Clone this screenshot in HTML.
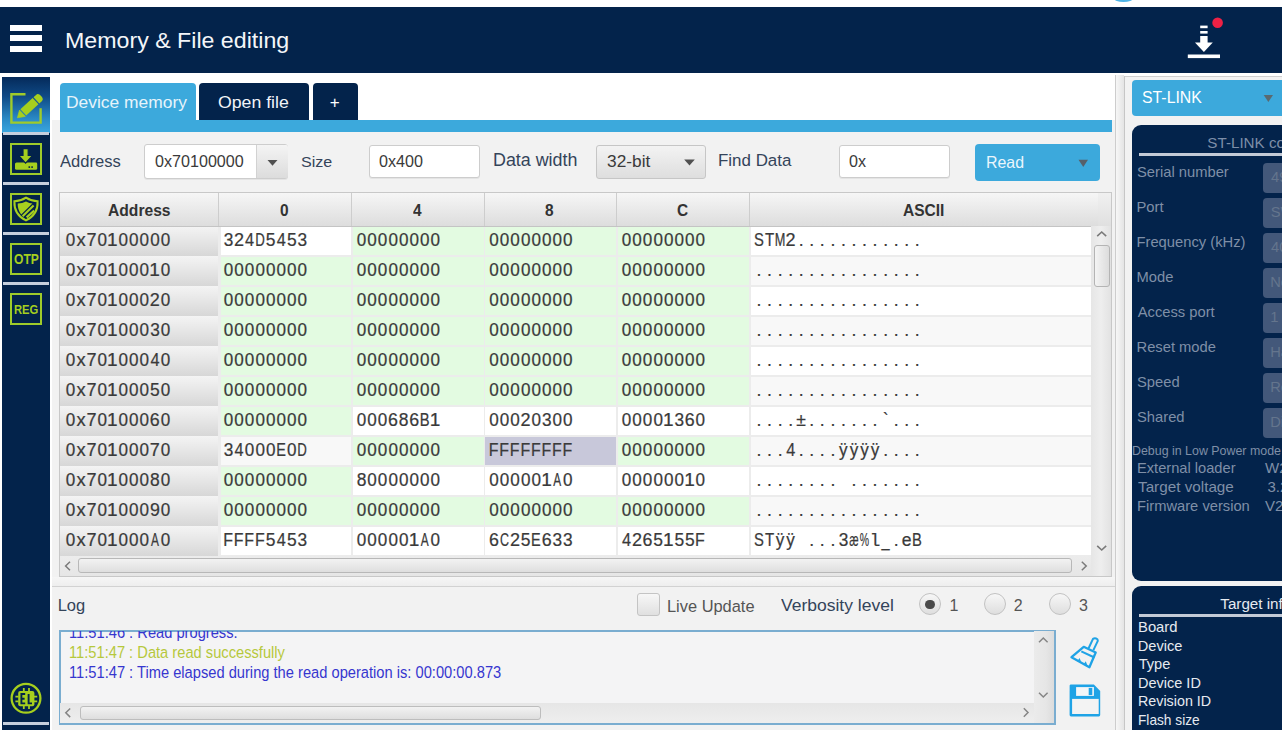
<!DOCTYPE html>
<html><head><meta charset="utf-8"><title>Memory &amp; File editing</title>
<style>
*{margin:0;padding:0;box-sizing:border-box}
html,body{width:1282px;height:730px;overflow:hidden;background:#fff;position:relative}
.a{position:absolute}
svg.a{overflow:visible}
.tS,.tM{position:absolute;white-space:pre;line-height:1;font-family:"Liberation Sans", sans-serif}
.tM{font-family:"Liberation Mono", monospace}
</style></head>
<body>
<div class="a" style="left:0px;top:0px;width:1282px;height:77px;background:#fff"></div><div class="a" style="left:1114px;top:-5px;width:19px;height:7px;border-radius:50%;background:#4db3e6"></div><div class="a" style="left:0px;top:7px;width:1282px;height:65.5px;background:#03234b"></div><div class="a" style="left:10px;top:25px;width:32px;height:6px;background:#fff"></div><div class="a" style="left:10px;top:35px;width:32px;height:6px;background:#fff"></div><div class="a" style="left:10px;top:45.6px;width:32px;height:6px;background:#fff"></div><div class="tS" style="left:64.64px;top:28.66px;font-size:22.85px;color:#f4f6f9;transform:scaleX(1.0149);transform-origin:0 0;">Memory &amp; File editing</div><svg class="a" style="left:0;top:0" width="1282" height="80">
<rect x="1200.2" y="25.6" width="7.4" height="2.6" fill="#fff"/>
<rect x="1200.2" y="31" width="7.4" height="2.6" fill="#fff"/>
<rect x="1200.2" y="36" width="7.4" height="7" fill="#fff"/>
<path d="M1195 42.4 H1212.8 L1203.9 52 Z" fill="#fff"/>
<rect x="1187.8" y="54.5" width="32.2" height="3.6" fill="#fff"/>
<circle cx="1217.6" cy="22.8" r="5.3" fill="#ee2145"/>
</svg><div class="a" style="left:52px;top:119.5px;width:1063px;height:611px;background:#f2f2f2"></div><div class="a" style="left:50px;top:73px;width:1065px;height:47px;background:#fff"></div><div class="a" style="left:50px;top:73px;width:2px;height:657px;background:#fff"></div><div class="a" style="left:2px;top:77px;width:48px;height:653px;background:#03234b"></div><div class="a" style="left:2px;top:77px;width:48px;height:55.5px;background:linear-gradient(to bottom,#052a5a 0%,#0f4a86 35%,#2a8ac6 75%,#3aa7e0 100%)"></div><div class="a" style="left:3px;top:132.3px;width:46px;height:2.5px;background:#c6cfdd"></div><div class="a" style="left:3px;top:182.2px;width:46px;height:2.5px;background:#c6cfdd"></div><div class="a" style="left:3px;top:232.2px;width:46px;height:2.5px;background:#c6cfdd"></div><div class="a" style="left:3px;top:282.4px;width:46px;height:2.5px;background:#c6cfdd"></div><div class="a" style="left:3px;top:722px;width:46px;height:2.5px;background:#c6cfdd"></div><div class="a" style="left:10px;top:143px;width:32px;height:31.5px;border:2.2px solid #9fcb2a"></div><div class="a" style="left:10px;top:193px;width:32px;height:31.5px;border:2.2px solid #9fcb2a"></div><div class="a" style="left:10px;top:243px;width:32px;height:31.5px;border:2.2px solid #9fcb2a"></div><div class="a" style="left:10px;top:293px;width:32px;height:31.5px;border:2.2px solid #9fcb2a"></div><svg class="a" style="left:10px;top:93px" width="32" height="32" viewBox="0 0 32 32">
<path d="M15.5 1.3 H1.4 V29.6 H30.6 V15.3" fill="none" stroke="#9fcb2a" stroke-width="2.4"/>
<g transform="translate(7.4,24.8) rotate(-42.5)">
<path d="M0 0 L6.8 -4.3 V4.3 Z" fill="#a6cf1e" stroke="#a6cf1e" stroke-width="0.6" stroke-linejoin="round"/>
<rect x="8" y="-4.3" width="16.6" height="8.6" fill="#a6cf1e"/>
<path d="M25.8 -4.3 H29.2 Q32.2 -4.3 32.2 0 Q32.2 4.3 29.2 4.3 H25.8 Z" fill="#a6cf1e"/>
</g>
</svg><svg class="a" style="left:10px;top:143px" width="32" height="32" viewBox="0 0 32 32">
<path d="M6.6 19.4 H26.4 Q27.2 19.4 27.2 21 V25.2 Q27.2 26.8 25.6 26.8 H6.6 Q5 26.8 5 25.2 V21 Q5 19.4 6.6 19.4 Z" fill="#a6cf1e"/>
<path d="M13 5.7 H18.2 V12.5 H22.6 L15.6 20.2 L8.6 12.5 H13 Z" fill="#a6cf1e" stroke="#03234b" stroke-width="1.2" stroke-linejoin="miter"/>
<rect x="18.5" y="23.3" width="1.6" height="1.6" fill="#03234b"/>
<rect x="21.3" y="23.3" width="1.6" height="1.6" fill="#03234b"/>
</svg><svg class="a" style="left:10px;top:193px" width="32" height="32" viewBox="0 0 32 32">
<path d="M16 4.6 Q21.5 8.2 27.6 8.2 Q28.2 21.5 16 27.4 Q3.8 21.5 4.4 8.2 Q10.5 8.2 16 4.6 Z" fill="none" stroke="#a6cf1e" stroke-width="2"/>
<path d="M16 8.4 Q19.5 10.4 22.4 10.6 L11.2 21.6 Q7.4 16.5 7.7 10.6 Q12.5 10.4 16 8.4 Z" fill="#a6cf1e"/>
<path d="M23.6 12.6 L12.6 23.2 M24.2 17.6 L16.6 24.4" stroke="#a6cf1e" stroke-width="2.1" fill="none"/>
</svg><div class="tS" style="left:13.72px;top:252.33px;font-size:14.5px;color:#a6cf1e;font-weight:bold;transform:scaleX(0.8338);transform-origin:0 0;">OTP</div><div class="tS" style="left:14.27px;top:303.03px;font-size:13.2px;color:#a6cf1e;font-weight:bold;transform:scaleX(0.8520);transform-origin:0 0;">REG</div><svg class="a" style="left:8px;top:680px" width="36" height="36" viewBox="0 0 36 36">
<circle cx="18" cy="18.3" r="14.4" fill="none" stroke="#a6cf1e" stroke-width="2.3"/>
<rect x="10.2" y="11" width="16.2" height="15.3" rx="2" fill="#a6cf1e"/>
<path d="M15.8 8 V11.5 M21 8 V11.5 M15.8 25.5 V29 M21 25.5 V29 M7.4 16.6 H10.6 M7.4 21.3 H10.6 M26 16.6 H29.2 M26 21.3 H29.2" stroke="#a6cf1e" stroke-width="1.8"/>
<path d="M17.2 14 H13.4 V23.4 H17.2 M13.4 18.7 H16.6 M20.6 14 V23.4 H24" fill="none" stroke="#03234b" stroke-width="1.9"/>
</svg><div class="a" style="left:59.5px;top:83px;width:136px;height:48px;background:#3ca9dc;border-radius:4px 4px 0 0"></div><div class="a" style="left:198.7px;top:83px;width:110.3px;height:36.5px;background:#03234b;border-radius:4px 4px 0 0"></div><div class="a" style="left:312.5px;top:83px;width:45.5px;height:36.5px;background:#03234b;border-radius:4px 4px 0 0"></div><div class="a" style="left:59.5px;top:119.5px;width:1052.5px;height:12.5px;background:#3ca9dc"></div><div class="tS" style="left:66.11px;top:93.65px;font-size:17.19px;color:#e6f4fb;transform:scaleX(1.0126);transform-origin:0 0;">Device memory</div><div class="tS" style="left:217.90px;top:93.54px;font-size:17.32px;color:#f2f4f8;transform:scaleX(1.0220);transform-origin:0 0;">Open file</div><div class="tS" style="left:329.74px;top:93.81px;font-size:17px;color:#fff;">+</div><div class="tS" style="left:59.80px;top:153.12px;font-size:16.4px;color:#34445a;transform:scaleX(1.0098);transform-origin:0 0;">Address</div><div class="a" style="left:144.4px;top:144.4px;width:144.1px;height:34.3px;background:#fff;border:1px solid #cdcdcd;border-radius:3px;box-shadow:0 1px 0 #e4e4e4"></div><div class="a" style="left:256px;top:145.4px;width:31.5px;height:32.3px;background:linear-gradient(#f4f4f4,#dcdcdc);border-left:1px solid #d2d2d2;border-radius:0 2px 2px 0"></div><svg class="a" style="left:0;top:0" width="1282" height="730"><path d="M267.5 160 H277.5 L272.5 165.8 Z" fill="#505050"/></svg><div class="tS" style="left:155.04px;top:154.41px;font-size:15.7px;color:#3a3a3a;transform:scaleX(1.0278);transform-origin:0 0;">0x70100000</div><div class="tS" style="left:301.08px;top:154.02px;font-size:15.33px;color:#34445a;transform:scaleX(1.0486);transform-origin:0 0;">Size</div><div class="a" style="left:368.5px;top:144.7px;width:111.1px;height:33.7px;background:#fff;border:1px solid #cdcdcd;border-radius:3px;box-shadow:0 1px 0 #e4e4e4"></div><div class="tS" style="left:378.73px;top:154.41px;font-size:15.7px;color:#3a3a3a;transform:scaleX(1.0292);transform-origin:0 0;">0x400</div><div class="tS" style="left:492.57px;top:152.20px;font-size:17.48px;color:#34445a;transform:scaleX(1.0231);transform-origin:0 0;">Data width</div><div class="a" style="left:595.6px;top:144.5px;width:110.4px;height:34.2px;background:linear-gradient(#f3f3f3,#dedede);border:1px solid #c6c6c6;border-radius:3px"></div><div class="tS" style="left:606.89px;top:154.41px;font-size:15.7px;color:#3a3a3a;transform:scaleX(1.1033);transform-origin:0 0;">32-bit</div><svg class="a" style="left:0;top:0" width="1282" height="730"><path d="M684.2 159.6 H694.8 L689.5 165.6 Z" fill="#505050"/></svg><div class="tS" style="left:718.44px;top:152.85px;font-size:16.71px;color:#34445a;transform:scaleX(1.0143);transform-origin:0 0;">Find Data</div><div class="a" style="left:838.5px;top:144.7px;width:111.1px;height:33.7px;background:#fff;border:1px solid #cdcdcd;border-radius:3px;box-shadow:0 1px 0 #e4e4e4"></div><div class="tS" style="left:848.74px;top:154.41px;font-size:15.7px;color:#3a3a3a;transform:scaleX(1.0279);transform-origin:0 0;">0x</div><div class="a" style="left:975.2px;top:144.4px;width:124.6px;height:36.2px;background:#3ca9dc;border-radius:4px"></div><div class="tS" style="left:985.93px;top:153.73px;font-size:16.5px;color:#eaf6fc;transform:scaleX(0.9643);transform-origin:0 0;">Read</div><svg class="a" style="left:0;top:0" width="1282" height="730"><path d="M1078.5 159.7 H1088 L1083.25 166.9 Z" fill="#56606a"/></svg><div class="a" style="left:59px;top:192px;width:1053px;height:385px;background:#fff;border:1px solid #c8c8c8"></div><div class="a" style="left:60px;top:193px;width:1051px;height:34px;background:linear-gradient(#f6f6f6,#dddddd);border-bottom:1px solid #c4c4c4"></div><div class="a" style="left:218px;top:193px;width:1px;height:33px;background:#cdcdcd"></div><div class="a" style="left:351px;top:193px;width:1px;height:33px;background:#cdcdcd"></div><div class="a" style="left:483.5px;top:193px;width:1px;height:33px;background:#cdcdcd"></div><div class="a" style="left:616px;top:193px;width:1px;height:33px;background:#cdcdcd"></div><div class="a" style="left:749px;top:193px;width:1px;height:33px;background:#cdcdcd"></div><div class="a" style="left:1098px;top:193px;width:1px;height:33px;background:#cdcdcd"></div><div class="tS" style="left:108.41px;top:202.95px;font-size:16.6px;color:#333;font-weight:bold;transform:scaleX(0.9418);transform-origin:0 0;">Address</div><div class="tS" style="left:280.22px;top:202.95px;font-size:16.6px;color:#333;font-weight:bold;transform:scaleX(0.9300);transform-origin:0 0;">0</div><div class="tS" style="left:412.85px;top:202.95px;font-size:16.6px;color:#333;font-weight:bold;transform:scaleX(0.9300);transform-origin:0 0;">4</div><div class="tS" style="left:545.43px;top:202.95px;font-size:16.6px;color:#333;font-weight:bold;transform:scaleX(0.9300);transform-origin:0 0;">8</div><div class="tS" style="left:676.83px;top:202.95px;font-size:16.6px;color:#333;font-weight:bold;transform:scaleX(0.9300);transform-origin:0 0;">C</div><div class="tS" style="left:902.91px;top:202.95px;font-size:16.6px;color:#333;font-weight:bold;transform:scaleX(0.9363);transform-origin:0 0;">ASCII</div><div class="a" style="left:218px;top:226px;width:873.3px;height:30px;background:#ececec"></div><div class="a" style="left:60px;top:226px;width:158px;height:30px;background:linear-gradient(#f4f4f4,#d7d7d7)"></div><div class="a" style="left:220.5px;top:227px;width:130.5px;height:28px;background:#ffffff"></div><div class="a" style="left:352.5px;top:227px;width:131.0px;height:28px;background:#e3fbe1"></div><div class="a" style="left:485.0px;top:227px;width:131.0px;height:28px;background:#e3fbe1"></div><div class="a" style="left:617.5px;top:227px;width:131.5px;height:28px;background:#e3fbe1"></div><div class="a" style="left:750.5px;top:227px;width:340.8px;height:28px;background:#ffffff"></div><div class="a" style="left:218px;top:256px;width:873.3px;height:30px;background:#ececec"></div><div class="a" style="left:60px;top:256px;width:158px;height:30px;background:linear-gradient(#f4f4f4,#d7d7d7)"></div><div class="a" style="left:220.5px;top:257px;width:130.5px;height:28px;background:#e3fbe1"></div><div class="a" style="left:352.5px;top:257px;width:131.0px;height:28px;background:#e3fbe1"></div><div class="a" style="left:485.0px;top:257px;width:131.0px;height:28px;background:#e3fbe1"></div><div class="a" style="left:617.5px;top:257px;width:131.5px;height:28px;background:#e3fbe1"></div><div class="a" style="left:750.5px;top:257px;width:340.8px;height:28px;background:#f8f8f8"></div><div class="a" style="left:218px;top:286px;width:873.3px;height:30px;background:#ececec"></div><div class="a" style="left:60px;top:286px;width:158px;height:30px;background:linear-gradient(#f4f4f4,#d7d7d7)"></div><div class="a" style="left:220.5px;top:287px;width:130.5px;height:28px;background:#e3fbe1"></div><div class="a" style="left:352.5px;top:287px;width:131.0px;height:28px;background:#e3fbe1"></div><div class="a" style="left:485.0px;top:287px;width:131.0px;height:28px;background:#e3fbe1"></div><div class="a" style="left:617.5px;top:287px;width:131.5px;height:28px;background:#e3fbe1"></div><div class="a" style="left:750.5px;top:287px;width:340.8px;height:28px;background:#ffffff"></div><div class="a" style="left:218px;top:316px;width:873.3px;height:30px;background:#ececec"></div><div class="a" style="left:60px;top:316px;width:158px;height:30px;background:linear-gradient(#f4f4f4,#d7d7d7)"></div><div class="a" style="left:220.5px;top:317px;width:130.5px;height:28px;background:#e3fbe1"></div><div class="a" style="left:352.5px;top:317px;width:131.0px;height:28px;background:#e3fbe1"></div><div class="a" style="left:485.0px;top:317px;width:131.0px;height:28px;background:#e3fbe1"></div><div class="a" style="left:617.5px;top:317px;width:131.5px;height:28px;background:#e3fbe1"></div><div class="a" style="left:750.5px;top:317px;width:340.8px;height:28px;background:#f8f8f8"></div><div class="a" style="left:218px;top:346px;width:873.3px;height:30px;background:#ececec"></div><div class="a" style="left:60px;top:346px;width:158px;height:30px;background:linear-gradient(#f4f4f4,#d7d7d7)"></div><div class="a" style="left:220.5px;top:347px;width:130.5px;height:28px;background:#e3fbe1"></div><div class="a" style="left:352.5px;top:347px;width:131.0px;height:28px;background:#e3fbe1"></div><div class="a" style="left:485.0px;top:347px;width:131.0px;height:28px;background:#e3fbe1"></div><div class="a" style="left:617.5px;top:347px;width:131.5px;height:28px;background:#e3fbe1"></div><div class="a" style="left:750.5px;top:347px;width:340.8px;height:28px;background:#ffffff"></div><div class="a" style="left:218px;top:376px;width:873.3px;height:30px;background:#ececec"></div><div class="a" style="left:60px;top:376px;width:158px;height:30px;background:linear-gradient(#f4f4f4,#d7d7d7)"></div><div class="a" style="left:220.5px;top:377px;width:130.5px;height:28px;background:#e3fbe1"></div><div class="a" style="left:352.5px;top:377px;width:131.0px;height:28px;background:#e3fbe1"></div><div class="a" style="left:485.0px;top:377px;width:131.0px;height:28px;background:#e3fbe1"></div><div class="a" style="left:617.5px;top:377px;width:131.5px;height:28px;background:#e3fbe1"></div><div class="a" style="left:750.5px;top:377px;width:340.8px;height:28px;background:#f8f8f8"></div><div class="a" style="left:218px;top:406px;width:873.3px;height:30px;background:#ececec"></div><div class="a" style="left:60px;top:406px;width:158px;height:30px;background:linear-gradient(#f4f4f4,#d7d7d7)"></div><div class="a" style="left:220.5px;top:407px;width:130.5px;height:28px;background:#e3fbe1"></div><div class="a" style="left:352.5px;top:407px;width:131.0px;height:28px;background:#ffffff"></div><div class="a" style="left:485.0px;top:407px;width:131.0px;height:28px;background:#ffffff"></div><div class="a" style="left:617.5px;top:407px;width:131.5px;height:28px;background:#ffffff"></div><div class="a" style="left:750.5px;top:407px;width:340.8px;height:28px;background:#ffffff"></div><div class="a" style="left:218px;top:436px;width:873.3px;height:30px;background:#ececec"></div><div class="a" style="left:60px;top:436px;width:158px;height:30px;background:linear-gradient(#f4f4f4,#d7d7d7)"></div><div class="a" style="left:220.5px;top:437px;width:130.5px;height:28px;background:#f8f8f8"></div><div class="a" style="left:352.5px;top:437px;width:131.0px;height:28px;background:#e3fbe1"></div><div class="a" style="left:485.0px;top:437px;width:131.0px;height:28px;background:#c8c8da"></div><div class="a" style="left:617.5px;top:437px;width:131.5px;height:28px;background:#e3fbe1"></div><div class="a" style="left:750.5px;top:437px;width:340.8px;height:28px;background:#f8f8f8"></div><div class="a" style="left:218px;top:466px;width:873.3px;height:30px;background:#ececec"></div><div class="a" style="left:60px;top:466px;width:158px;height:30px;background:linear-gradient(#f4f4f4,#d7d7d7)"></div><div class="a" style="left:220.5px;top:467px;width:130.5px;height:28px;background:#e3fbe1"></div><div class="a" style="left:352.5px;top:467px;width:131.0px;height:28px;background:#ffffff"></div><div class="a" style="left:485.0px;top:467px;width:131.0px;height:28px;background:#ffffff"></div><div class="a" style="left:617.5px;top:467px;width:131.5px;height:28px;background:#ffffff"></div><div class="a" style="left:750.5px;top:467px;width:340.8px;height:28px;background:#ffffff"></div><div class="a" style="left:218px;top:496px;width:873.3px;height:30px;background:#ececec"></div><div class="a" style="left:60px;top:496px;width:158px;height:30px;background:linear-gradient(#f4f4f4,#d7d7d7)"></div><div class="a" style="left:220.5px;top:497px;width:130.5px;height:28px;background:#e3fbe1"></div><div class="a" style="left:352.5px;top:497px;width:131.0px;height:28px;background:#e3fbe1"></div><div class="a" style="left:485.0px;top:497px;width:131.0px;height:28px;background:#e3fbe1"></div><div class="a" style="left:617.5px;top:497px;width:131.5px;height:28px;background:#e3fbe1"></div><div class="a" style="left:750.5px;top:497px;width:340.8px;height:28px;background:#f8f8f8"></div><div class="a" style="left:218px;top:526px;width:873.3px;height:30px;background:#ececec"></div><div class="a" style="left:60px;top:526px;width:158px;height:30px;background:linear-gradient(#f4f4f4,#d7d7d7)"></div><div class="a" style="left:220.5px;top:527px;width:130.5px;height:28px;background:#ffffff"></div><div class="a" style="left:352.5px;top:527px;width:131.0px;height:28px;background:#ffffff"></div><div class="a" style="left:485.0px;top:527px;width:131.0px;height:28px;background:#ffffff"></div><div class="a" style="left:617.5px;top:527px;width:131.5px;height:28px;background:#ffffff"></div><div class="a" style="left:750.5px;top:527px;width:340.8px;height:28px;background:#ffffff"></div><div class="a" style="left:60px;top:226px;width:1051px;height:1px;background:#c4c4c4"></div><svg class="a" style="left:0;top:0" width="1282" height="730"><g font-family="Liberation Sans" font-size="17.6" fill="#3a3a3a" stroke="#3a3a3a" stroke-width="0.22"><text transform="matrix(0.972 0 0 1 65.75 245.60)">0</text><text transform="matrix(1.042 0 0 1 76.47 245.60)">x</text><text transform="matrix(1.025 0 0 1 86.55 245.60)">7</text><text transform="matrix(0.972 0 0 1 97.40 245.60)">0</text><text transform="matrix(1.084 0 0 1 107.12 245.60)">1</text><text transform="matrix(0.972 0 0 1 118.50 245.60)">0</text><text transform="matrix(0.972 0 0 1 129.05 245.60)">0</text><text transform="matrix(0.972 0 0 1 139.60 245.60)">0</text><text transform="matrix(0.972 0 0 1 150.15 245.60)">0</text><text transform="matrix(0.972 0 0 1 160.70 245.60)">0</text><text transform="matrix(0.982 0 0 1 223.74 245.60)">3</text><text transform="matrix(1.025 0 0 1 234.00 245.60)">2</text><text transform="matrix(0.925 0 0 1 245.12 245.60)">4</text><text transform="matrix(0.754 0 0 1 255.14 245.60)">D</text><text transform="matrix(0.993 0 0 1 265.85 245.60)">5</text><text transform="matrix(0.925 0 0 1 276.77 245.60)">4</text><text transform="matrix(0.993 0 0 1 286.95 245.60)">5</text><text transform="matrix(0.982 0 0 1 297.59 245.60)">3</text><text transform="matrix(0.972 0 0 1 356.75 245.60)">0</text><text transform="matrix(0.972 0 0 1 367.30 245.60)">0</text><text transform="matrix(0.972 0 0 1 377.85 245.60)">0</text><text transform="matrix(0.972 0 0 1 388.40 245.60)">0</text><text transform="matrix(0.972 0 0 1 398.95 245.60)">0</text><text transform="matrix(0.972 0 0 1 409.50 245.60)">0</text><text transform="matrix(0.972 0 0 1 420.05 245.60)">0</text><text transform="matrix(0.972 0 0 1 430.60 245.60)">0</text><text transform="matrix(0.972 0 0 1 489.25 245.60)">0</text><text transform="matrix(0.972 0 0 1 499.80 245.60)">0</text><text transform="matrix(0.972 0 0 1 510.35 245.60)">0</text><text transform="matrix(0.972 0 0 1 520.90 245.60)">0</text><text transform="matrix(0.972 0 0 1 531.45 245.60)">0</text><text transform="matrix(0.972 0 0 1 542.00 245.60)">0</text><text transform="matrix(0.972 0 0 1 552.55 245.60)">0</text><text transform="matrix(0.972 0 0 1 563.10 245.60)">0</text><text transform="matrix(0.972 0 0 1 621.75 245.60)">0</text><text transform="matrix(0.972 0 0 1 632.30 245.60)">0</text><text transform="matrix(0.972 0 0 1 642.85 245.60)">0</text><text transform="matrix(0.972 0 0 1 653.40 245.60)">0</text><text transform="matrix(0.972 0 0 1 663.95 245.60)">0</text><text transform="matrix(0.972 0 0 1 674.50 245.60)">0</text><text transform="matrix(0.972 0 0 1 685.05 245.60)">0</text><text transform="matrix(0.972 0 0 1 695.60 245.60)">0</text><text transform="matrix(0.842 0 0 1 754.03 245.60)">S</text><text transform="matrix(0.857 0 0 1 764.95 245.60)">T</text><text transform="matrix(0.724 0 0 1 774.78 245.60)">M</text><text transform="matrix(1.025 0 0 1 785.60 245.60)">2</text><text transform="matrix(1.000 0 0 1 798.74 245.60)">.</text><text transform="matrix(1.000 0 0 1 809.29 245.60)">.</text><text transform="matrix(1.000 0 0 1 819.84 245.60)">.</text><text transform="matrix(1.000 0 0 1 830.39 245.60)">.</text><text transform="matrix(1.000 0 0 1 840.94 245.60)">.</text><text transform="matrix(1.000 0 0 1 851.49 245.60)">.</text><text transform="matrix(1.000 0 0 1 862.04 245.60)">.</text><text transform="matrix(1.000 0 0 1 872.59 245.60)">.</text><text transform="matrix(1.000 0 0 1 883.14 245.60)">.</text><text transform="matrix(1.000 0 0 1 893.69 245.60)">.</text><text transform="matrix(1.000 0 0 1 904.24 245.60)">.</text><text transform="matrix(1.000 0 0 1 914.79 245.60)">.</text><text transform="matrix(0.972 0 0 1 65.75 275.60)">0</text><text transform="matrix(1.042 0 0 1 76.47 275.60)">x</text><text transform="matrix(1.025 0 0 1 86.55 275.60)">7</text><text transform="matrix(0.972 0 0 1 97.40 275.60)">0</text><text transform="matrix(1.084 0 0 1 107.12 275.60)">1</text><text transform="matrix(0.972 0 0 1 118.50 275.60)">0</text><text transform="matrix(0.972 0 0 1 129.05 275.60)">0</text><text transform="matrix(0.972 0 0 1 139.60 275.60)">0</text><text transform="matrix(1.084 0 0 1 149.32 275.60)">1</text><text transform="matrix(0.972 0 0 1 160.70 275.60)">0</text><text transform="matrix(0.972 0 0 1 223.75 275.60)">0</text><text transform="matrix(0.972 0 0 1 234.30 275.60)">0</text><text transform="matrix(0.972 0 0 1 244.85 275.60)">0</text><text transform="matrix(0.972 0 0 1 255.40 275.60)">0</text><text transform="matrix(0.972 0 0 1 265.95 275.60)">0</text><text transform="matrix(0.972 0 0 1 276.50 275.60)">0</text><text transform="matrix(0.972 0 0 1 287.05 275.60)">0</text><text transform="matrix(0.972 0 0 1 297.60 275.60)">0</text><text transform="matrix(0.972 0 0 1 356.75 275.60)">0</text><text transform="matrix(0.972 0 0 1 367.30 275.60)">0</text><text transform="matrix(0.972 0 0 1 377.85 275.60)">0</text><text transform="matrix(0.972 0 0 1 388.40 275.60)">0</text><text transform="matrix(0.972 0 0 1 398.95 275.60)">0</text><text transform="matrix(0.972 0 0 1 409.50 275.60)">0</text><text transform="matrix(0.972 0 0 1 420.05 275.60)">0</text><text transform="matrix(0.972 0 0 1 430.60 275.60)">0</text><text transform="matrix(0.972 0 0 1 489.25 275.60)">0</text><text transform="matrix(0.972 0 0 1 499.80 275.60)">0</text><text transform="matrix(0.972 0 0 1 510.35 275.60)">0</text><text transform="matrix(0.972 0 0 1 520.90 275.60)">0</text><text transform="matrix(0.972 0 0 1 531.45 275.60)">0</text><text transform="matrix(0.972 0 0 1 542.00 275.60)">0</text><text transform="matrix(0.972 0 0 1 552.55 275.60)">0</text><text transform="matrix(0.972 0 0 1 563.10 275.60)">0</text><text transform="matrix(0.972 0 0 1 621.75 275.60)">0</text><text transform="matrix(0.972 0 0 1 632.30 275.60)">0</text><text transform="matrix(0.972 0 0 1 642.85 275.60)">0</text><text transform="matrix(0.972 0 0 1 653.40 275.60)">0</text><text transform="matrix(0.972 0 0 1 663.95 275.60)">0</text><text transform="matrix(0.972 0 0 1 674.50 275.60)">0</text><text transform="matrix(0.972 0 0 1 685.05 275.60)">0</text><text transform="matrix(0.972 0 0 1 695.60 275.60)">0</text><text transform="matrix(1.000 0 0 1 756.54 275.60)">.</text><text transform="matrix(1.000 0 0 1 767.09 275.60)">.</text><text transform="matrix(1.000 0 0 1 777.64 275.60)">.</text><text transform="matrix(1.000 0 0 1 788.19 275.60)">.</text><text transform="matrix(1.000 0 0 1 798.74 275.60)">.</text><text transform="matrix(1.000 0 0 1 809.29 275.60)">.</text><text transform="matrix(1.000 0 0 1 819.84 275.60)">.</text><text transform="matrix(1.000 0 0 1 830.39 275.60)">.</text><text transform="matrix(1.000 0 0 1 840.94 275.60)">.</text><text transform="matrix(1.000 0 0 1 851.49 275.60)">.</text><text transform="matrix(1.000 0 0 1 862.04 275.60)">.</text><text transform="matrix(1.000 0 0 1 872.59 275.60)">.</text><text transform="matrix(1.000 0 0 1 883.14 275.60)">.</text><text transform="matrix(1.000 0 0 1 893.69 275.60)">.</text><text transform="matrix(1.000 0 0 1 904.24 275.60)">.</text><text transform="matrix(1.000 0 0 1 914.79 275.60)">.</text><text transform="matrix(0.972 0 0 1 65.75 305.60)">0</text><text transform="matrix(1.042 0 0 1 76.47 305.60)">x</text><text transform="matrix(1.025 0 0 1 86.55 305.60)">7</text><text transform="matrix(0.972 0 0 1 97.40 305.60)">0</text><text transform="matrix(1.084 0 0 1 107.12 305.60)">1</text><text transform="matrix(0.972 0 0 1 118.50 305.60)">0</text><text transform="matrix(0.972 0 0 1 129.05 305.60)">0</text><text transform="matrix(0.972 0 0 1 139.60 305.60)">0</text><text transform="matrix(1.025 0 0 1 149.85 305.60)">2</text><text transform="matrix(0.972 0 0 1 160.70 305.60)">0</text><text transform="matrix(0.972 0 0 1 223.75 305.60)">0</text><text transform="matrix(0.972 0 0 1 234.30 305.60)">0</text><text transform="matrix(0.972 0 0 1 244.85 305.60)">0</text><text transform="matrix(0.972 0 0 1 255.40 305.60)">0</text><text transform="matrix(0.972 0 0 1 265.95 305.60)">0</text><text transform="matrix(0.972 0 0 1 276.50 305.60)">0</text><text transform="matrix(0.972 0 0 1 287.05 305.60)">0</text><text transform="matrix(0.972 0 0 1 297.60 305.60)">0</text><text transform="matrix(0.972 0 0 1 356.75 305.60)">0</text><text transform="matrix(0.972 0 0 1 367.30 305.60)">0</text><text transform="matrix(0.972 0 0 1 377.85 305.60)">0</text><text transform="matrix(0.972 0 0 1 388.40 305.60)">0</text><text transform="matrix(0.972 0 0 1 398.95 305.60)">0</text><text transform="matrix(0.972 0 0 1 409.50 305.60)">0</text><text transform="matrix(0.972 0 0 1 420.05 305.60)">0</text><text transform="matrix(0.972 0 0 1 430.60 305.60)">0</text><text transform="matrix(0.972 0 0 1 489.25 305.60)">0</text><text transform="matrix(0.972 0 0 1 499.80 305.60)">0</text><text transform="matrix(0.972 0 0 1 510.35 305.60)">0</text><text transform="matrix(0.972 0 0 1 520.90 305.60)">0</text><text transform="matrix(0.972 0 0 1 531.45 305.60)">0</text><text transform="matrix(0.972 0 0 1 542.00 305.60)">0</text><text transform="matrix(0.972 0 0 1 552.55 305.60)">0</text><text transform="matrix(0.972 0 0 1 563.10 305.60)">0</text><text transform="matrix(0.972 0 0 1 621.75 305.60)">0</text><text transform="matrix(0.972 0 0 1 632.30 305.60)">0</text><text transform="matrix(0.972 0 0 1 642.85 305.60)">0</text><text transform="matrix(0.972 0 0 1 653.40 305.60)">0</text><text transform="matrix(0.972 0 0 1 663.95 305.60)">0</text><text transform="matrix(0.972 0 0 1 674.50 305.60)">0</text><text transform="matrix(0.972 0 0 1 685.05 305.60)">0</text><text transform="matrix(0.972 0 0 1 695.60 305.60)">0</text><text transform="matrix(1.000 0 0 1 756.54 305.60)">.</text><text transform="matrix(1.000 0 0 1 767.09 305.60)">.</text><text transform="matrix(1.000 0 0 1 777.64 305.60)">.</text><text transform="matrix(1.000 0 0 1 788.19 305.60)">.</text><text transform="matrix(1.000 0 0 1 798.74 305.60)">.</text><text transform="matrix(1.000 0 0 1 809.29 305.60)">.</text><text transform="matrix(1.000 0 0 1 819.84 305.60)">.</text><text transform="matrix(1.000 0 0 1 830.39 305.60)">.</text><text transform="matrix(1.000 0 0 1 840.94 305.60)">.</text><text transform="matrix(1.000 0 0 1 851.49 305.60)">.</text><text transform="matrix(1.000 0 0 1 862.04 305.60)">.</text><text transform="matrix(1.000 0 0 1 872.59 305.60)">.</text><text transform="matrix(1.000 0 0 1 883.14 305.60)">.</text><text transform="matrix(1.000 0 0 1 893.69 305.60)">.</text><text transform="matrix(1.000 0 0 1 904.24 305.60)">.</text><text transform="matrix(1.000 0 0 1 914.79 305.60)">.</text><text transform="matrix(0.972 0 0 1 65.75 335.60)">0</text><text transform="matrix(1.042 0 0 1 76.47 335.60)">x</text><text transform="matrix(1.025 0 0 1 86.55 335.60)">7</text><text transform="matrix(0.972 0 0 1 97.40 335.60)">0</text><text transform="matrix(1.084 0 0 1 107.12 335.60)">1</text><text transform="matrix(0.972 0 0 1 118.50 335.60)">0</text><text transform="matrix(0.972 0 0 1 129.05 335.60)">0</text><text transform="matrix(0.972 0 0 1 139.60 335.60)">0</text><text transform="matrix(0.982 0 0 1 150.14 335.60)">3</text><text transform="matrix(0.972 0 0 1 160.70 335.60)">0</text><text transform="matrix(0.972 0 0 1 223.75 335.60)">0</text><text transform="matrix(0.972 0 0 1 234.30 335.60)">0</text><text transform="matrix(0.972 0 0 1 244.85 335.60)">0</text><text transform="matrix(0.972 0 0 1 255.40 335.60)">0</text><text transform="matrix(0.972 0 0 1 265.95 335.60)">0</text><text transform="matrix(0.972 0 0 1 276.50 335.60)">0</text><text transform="matrix(0.972 0 0 1 287.05 335.60)">0</text><text transform="matrix(0.972 0 0 1 297.60 335.60)">0</text><text transform="matrix(0.972 0 0 1 356.75 335.60)">0</text><text transform="matrix(0.972 0 0 1 367.30 335.60)">0</text><text transform="matrix(0.972 0 0 1 377.85 335.60)">0</text><text transform="matrix(0.972 0 0 1 388.40 335.60)">0</text><text transform="matrix(0.972 0 0 1 398.95 335.60)">0</text><text transform="matrix(0.972 0 0 1 409.50 335.60)">0</text><text transform="matrix(0.972 0 0 1 420.05 335.60)">0</text><text transform="matrix(0.972 0 0 1 430.60 335.60)">0</text><text transform="matrix(0.972 0 0 1 489.25 335.60)">0</text><text transform="matrix(0.972 0 0 1 499.80 335.60)">0</text><text transform="matrix(0.972 0 0 1 510.35 335.60)">0</text><text transform="matrix(0.972 0 0 1 520.90 335.60)">0</text><text transform="matrix(0.972 0 0 1 531.45 335.60)">0</text><text transform="matrix(0.972 0 0 1 542.00 335.60)">0</text><text transform="matrix(0.972 0 0 1 552.55 335.60)">0</text><text transform="matrix(0.972 0 0 1 563.10 335.60)">0</text><text transform="matrix(0.972 0 0 1 621.75 335.60)">0</text><text transform="matrix(0.972 0 0 1 632.30 335.60)">0</text><text transform="matrix(0.972 0 0 1 642.85 335.60)">0</text><text transform="matrix(0.972 0 0 1 653.40 335.60)">0</text><text transform="matrix(0.972 0 0 1 663.95 335.60)">0</text><text transform="matrix(0.972 0 0 1 674.50 335.60)">0</text><text transform="matrix(0.972 0 0 1 685.05 335.60)">0</text><text transform="matrix(0.972 0 0 1 695.60 335.60)">0</text><text transform="matrix(1.000 0 0 1 756.54 335.60)">.</text><text transform="matrix(1.000 0 0 1 767.09 335.60)">.</text><text transform="matrix(1.000 0 0 1 777.64 335.60)">.</text><text transform="matrix(1.000 0 0 1 788.19 335.60)">.</text><text transform="matrix(1.000 0 0 1 798.74 335.60)">.</text><text transform="matrix(1.000 0 0 1 809.29 335.60)">.</text><text transform="matrix(1.000 0 0 1 819.84 335.60)">.</text><text transform="matrix(1.000 0 0 1 830.39 335.60)">.</text><text transform="matrix(1.000 0 0 1 840.94 335.60)">.</text><text transform="matrix(1.000 0 0 1 851.49 335.60)">.</text><text transform="matrix(1.000 0 0 1 862.04 335.60)">.</text><text transform="matrix(1.000 0 0 1 872.59 335.60)">.</text><text transform="matrix(1.000 0 0 1 883.14 335.60)">.</text><text transform="matrix(1.000 0 0 1 893.69 335.60)">.</text><text transform="matrix(1.000 0 0 1 904.24 335.60)">.</text><text transform="matrix(1.000 0 0 1 914.79 335.60)">.</text><text transform="matrix(0.972 0 0 1 65.75 365.60)">0</text><text transform="matrix(1.042 0 0 1 76.47 365.60)">x</text><text transform="matrix(1.025 0 0 1 86.55 365.60)">7</text><text transform="matrix(0.972 0 0 1 97.40 365.60)">0</text><text transform="matrix(1.084 0 0 1 107.12 365.60)">1</text><text transform="matrix(0.972 0 0 1 118.50 365.60)">0</text><text transform="matrix(0.972 0 0 1 129.05 365.60)">0</text><text transform="matrix(0.972 0 0 1 139.60 365.60)">0</text><text transform="matrix(0.925 0 0 1 150.42 365.60)">4</text><text transform="matrix(0.972 0 0 1 160.70 365.60)">0</text><text transform="matrix(0.972 0 0 1 223.75 365.60)">0</text><text transform="matrix(0.972 0 0 1 234.30 365.60)">0</text><text transform="matrix(0.972 0 0 1 244.85 365.60)">0</text><text transform="matrix(0.972 0 0 1 255.40 365.60)">0</text><text transform="matrix(0.972 0 0 1 265.95 365.60)">0</text><text transform="matrix(0.972 0 0 1 276.50 365.60)">0</text><text transform="matrix(0.972 0 0 1 287.05 365.60)">0</text><text transform="matrix(0.972 0 0 1 297.60 365.60)">0</text><text transform="matrix(0.972 0 0 1 356.75 365.60)">0</text><text transform="matrix(0.972 0 0 1 367.30 365.60)">0</text><text transform="matrix(0.972 0 0 1 377.85 365.60)">0</text><text transform="matrix(0.972 0 0 1 388.40 365.60)">0</text><text transform="matrix(0.972 0 0 1 398.95 365.60)">0</text><text transform="matrix(0.972 0 0 1 409.50 365.60)">0</text><text transform="matrix(0.972 0 0 1 420.05 365.60)">0</text><text transform="matrix(0.972 0 0 1 430.60 365.60)">0</text><text transform="matrix(0.972 0 0 1 489.25 365.60)">0</text><text transform="matrix(0.972 0 0 1 499.80 365.60)">0</text><text transform="matrix(0.972 0 0 1 510.35 365.60)">0</text><text transform="matrix(0.972 0 0 1 520.90 365.60)">0</text><text transform="matrix(0.972 0 0 1 531.45 365.60)">0</text><text transform="matrix(0.972 0 0 1 542.00 365.60)">0</text><text transform="matrix(0.972 0 0 1 552.55 365.60)">0</text><text transform="matrix(0.972 0 0 1 563.10 365.60)">0</text><text transform="matrix(0.972 0 0 1 621.75 365.60)">0</text><text transform="matrix(0.972 0 0 1 632.30 365.60)">0</text><text transform="matrix(0.972 0 0 1 642.85 365.60)">0</text><text transform="matrix(0.972 0 0 1 653.40 365.60)">0</text><text transform="matrix(0.972 0 0 1 663.95 365.60)">0</text><text transform="matrix(0.972 0 0 1 674.50 365.60)">0</text><text transform="matrix(0.972 0 0 1 685.05 365.60)">0</text><text transform="matrix(0.972 0 0 1 695.60 365.60)">0</text><text transform="matrix(1.000 0 0 1 756.54 365.60)">.</text><text transform="matrix(1.000 0 0 1 767.09 365.60)">.</text><text transform="matrix(1.000 0 0 1 777.64 365.60)">.</text><text transform="matrix(1.000 0 0 1 788.19 365.60)">.</text><text transform="matrix(1.000 0 0 1 798.74 365.60)">.</text><text transform="matrix(1.000 0 0 1 809.29 365.60)">.</text><text transform="matrix(1.000 0 0 1 819.84 365.60)">.</text><text transform="matrix(1.000 0 0 1 830.39 365.60)">.</text><text transform="matrix(1.000 0 0 1 840.94 365.60)">.</text><text transform="matrix(1.000 0 0 1 851.49 365.60)">.</text><text transform="matrix(1.000 0 0 1 862.04 365.60)">.</text><text transform="matrix(1.000 0 0 1 872.59 365.60)">.</text><text transform="matrix(1.000 0 0 1 883.14 365.60)">.</text><text transform="matrix(1.000 0 0 1 893.69 365.60)">.</text><text transform="matrix(1.000 0 0 1 904.24 365.60)">.</text><text transform="matrix(1.000 0 0 1 914.79 365.60)">.</text><text transform="matrix(0.972 0 0 1 65.75 395.60)">0</text><text transform="matrix(1.042 0 0 1 76.47 395.60)">x</text><text transform="matrix(1.025 0 0 1 86.55 395.60)">7</text><text transform="matrix(0.972 0 0 1 97.40 395.60)">0</text><text transform="matrix(1.084 0 0 1 107.12 395.60)">1</text><text transform="matrix(0.972 0 0 1 118.50 395.60)">0</text><text transform="matrix(0.972 0 0 1 129.05 395.60)">0</text><text transform="matrix(0.972 0 0 1 139.60 395.60)">0</text><text transform="matrix(0.993 0 0 1 150.05 395.60)">5</text><text transform="matrix(0.972 0 0 1 160.70 395.60)">0</text><text transform="matrix(0.972 0 0 1 223.75 395.60)">0</text><text transform="matrix(0.972 0 0 1 234.30 395.60)">0</text><text transform="matrix(0.972 0 0 1 244.85 395.60)">0</text><text transform="matrix(0.972 0 0 1 255.40 395.60)">0</text><text transform="matrix(0.972 0 0 1 265.95 395.60)">0</text><text transform="matrix(0.972 0 0 1 276.50 395.60)">0</text><text transform="matrix(0.972 0 0 1 287.05 395.60)">0</text><text transform="matrix(0.972 0 0 1 297.60 395.60)">0</text><text transform="matrix(0.972 0 0 1 356.75 395.60)">0</text><text transform="matrix(0.972 0 0 1 367.30 395.60)">0</text><text transform="matrix(0.972 0 0 1 377.85 395.60)">0</text><text transform="matrix(0.972 0 0 1 388.40 395.60)">0</text><text transform="matrix(0.972 0 0 1 398.95 395.60)">0</text><text transform="matrix(0.972 0 0 1 409.50 395.60)">0</text><text transform="matrix(0.972 0 0 1 420.05 395.60)">0</text><text transform="matrix(0.972 0 0 1 430.60 395.60)">0</text><text transform="matrix(0.972 0 0 1 489.25 395.60)">0</text><text transform="matrix(0.972 0 0 1 499.80 395.60)">0</text><text transform="matrix(0.972 0 0 1 510.35 395.60)">0</text><text transform="matrix(0.972 0 0 1 520.90 395.60)">0</text><text transform="matrix(0.972 0 0 1 531.45 395.60)">0</text><text transform="matrix(0.972 0 0 1 542.00 395.60)">0</text><text transform="matrix(0.972 0 0 1 552.55 395.60)">0</text><text transform="matrix(0.972 0 0 1 563.10 395.60)">0</text><text transform="matrix(0.972 0 0 1 621.75 395.60)">0</text><text transform="matrix(0.972 0 0 1 632.30 395.60)">0</text><text transform="matrix(0.972 0 0 1 642.85 395.60)">0</text><text transform="matrix(0.972 0 0 1 653.40 395.60)">0</text><text transform="matrix(0.972 0 0 1 663.95 395.60)">0</text><text transform="matrix(0.972 0 0 1 674.50 395.60)">0</text><text transform="matrix(0.972 0 0 1 685.05 395.60)">0</text><text transform="matrix(0.972 0 0 1 695.60 395.60)">0</text><text transform="matrix(1.000 0 0 1 756.54 395.60)">.</text><text transform="matrix(1.000 0 0 1 767.09 395.60)">.</text><text transform="matrix(1.000 0 0 1 777.64 395.60)">.</text><text transform="matrix(1.000 0 0 1 788.19 395.60)">.</text><text transform="matrix(1.000 0 0 1 798.74 395.60)">.</text><text transform="matrix(1.000 0 0 1 809.29 395.60)">.</text><text transform="matrix(1.000 0 0 1 819.84 395.60)">.</text><text transform="matrix(1.000 0 0 1 830.39 395.60)">.</text><text transform="matrix(1.000 0 0 1 840.94 395.60)">.</text><text transform="matrix(1.000 0 0 1 851.49 395.60)">.</text><text transform="matrix(1.000 0 0 1 862.04 395.60)">.</text><text transform="matrix(1.000 0 0 1 872.59 395.60)">.</text><text transform="matrix(1.000 0 0 1 883.14 395.60)">.</text><text transform="matrix(1.000 0 0 1 893.69 395.60)">.</text><text transform="matrix(1.000 0 0 1 904.24 395.60)">.</text><text transform="matrix(1.000 0 0 1 914.79 395.60)">.</text><text transform="matrix(0.972 0 0 1 65.75 425.60)">0</text><text transform="matrix(1.042 0 0 1 76.47 425.60)">x</text><text transform="matrix(1.025 0 0 1 86.55 425.60)">7</text><text transform="matrix(0.972 0 0 1 97.40 425.60)">0</text><text transform="matrix(1.084 0 0 1 107.12 425.60)">1</text><text transform="matrix(0.972 0 0 1 118.50 425.60)">0</text><text transform="matrix(0.972 0 0 1 129.05 425.60)">0</text><text transform="matrix(0.972 0 0 1 139.60 425.60)">0</text><text transform="matrix(1.014 0 0 1 149.86 425.60)">6</text><text transform="matrix(0.972 0 0 1 160.70 425.60)">0</text><text transform="matrix(0.972 0 0 1 223.75 425.60)">0</text><text transform="matrix(0.972 0 0 1 234.30 425.60)">0</text><text transform="matrix(0.972 0 0 1 244.85 425.60)">0</text><text transform="matrix(0.972 0 0 1 255.40 425.60)">0</text><text transform="matrix(0.972 0 0 1 265.95 425.60)">0</text><text transform="matrix(0.972 0 0 1 276.50 425.60)">0</text><text transform="matrix(0.972 0 0 1 287.05 425.60)">0</text><text transform="matrix(0.972 0 0 1 297.60 425.60)">0</text><text transform="matrix(0.972 0 0 1 356.75 425.60)">0</text><text transform="matrix(0.972 0 0 1 367.30 425.60)">0</text><text transform="matrix(0.972 0 0 1 377.85 425.60)">0</text><text transform="matrix(1.014 0 0 1 388.11 425.60)">6</text><text transform="matrix(0.993 0 0 1 398.85 425.60)">8</text><text transform="matrix(1.014 0 0 1 409.21 425.60)">6</text><text transform="matrix(0.839 0 0 1 419.67 425.60)">B</text><text transform="matrix(1.084 0 0 1 429.77 425.60)">1</text><text transform="matrix(0.972 0 0 1 489.25 425.60)">0</text><text transform="matrix(0.972 0 0 1 499.80 425.60)">0</text><text transform="matrix(0.972 0 0 1 510.35 425.60)">0</text><text transform="matrix(1.025 0 0 1 520.60 425.60)">2</text><text transform="matrix(0.972 0 0 1 531.45 425.60)">0</text><text transform="matrix(0.982 0 0 1 541.99 425.60)">3</text><text transform="matrix(0.972 0 0 1 552.55 425.60)">0</text><text transform="matrix(0.972 0 0 1 563.10 425.60)">0</text><text transform="matrix(0.972 0 0 1 621.75 425.60)">0</text><text transform="matrix(0.972 0 0 1 632.30 425.60)">0</text><text transform="matrix(0.972 0 0 1 642.85 425.60)">0</text><text transform="matrix(0.972 0 0 1 653.40 425.60)">0</text><text transform="matrix(1.084 0 0 1 663.12 425.60)">1</text><text transform="matrix(0.982 0 0 1 674.49 425.60)">3</text><text transform="matrix(1.014 0 0 1 684.76 425.60)">6</text><text transform="matrix(0.972 0 0 1 695.60 425.60)">0</text><text transform="matrix(1.000 0 0 1 756.54 425.60)">.</text><text transform="matrix(1.000 0 0 1 767.09 425.60)">.</text><text transform="matrix(1.000 0 0 1 777.64 425.60)">.</text><text transform="matrix(1.000 0 0 1 788.19 425.60)">.</text><text transform="matrix(0.997 0 0 1 796.37 425.60)">±</text><text transform="matrix(1.000 0 0 1 809.29 425.60)">.</text><text transform="matrix(1.000 0 0 1 819.84 425.60)">.</text><text transform="matrix(1.000 0 0 1 830.39 425.60)">.</text><text transform="matrix(1.000 0 0 1 840.94 425.60)">.</text><text transform="matrix(1.000 0 0 1 851.49 425.60)">.</text><text transform="matrix(1.000 0 0 1 862.04 425.60)">.</text><text transform="matrix(1.000 0 0 1 872.59 425.60)">.</text><text transform="matrix(1.000 0 0 1 882.87 425.60)">`</text><text transform="matrix(1.000 0 0 1 893.69 425.60)">.</text><text transform="matrix(1.000 0 0 1 904.24 425.60)">.</text><text transform="matrix(1.000 0 0 1 914.79 425.60)">.</text><text transform="matrix(0.972 0 0 1 65.75 455.60)">0</text><text transform="matrix(1.042 0 0 1 76.47 455.60)">x</text><text transform="matrix(1.025 0 0 1 86.55 455.60)">7</text><text transform="matrix(0.972 0 0 1 97.40 455.60)">0</text><text transform="matrix(1.084 0 0 1 107.12 455.60)">1</text><text transform="matrix(0.972 0 0 1 118.50 455.60)">0</text><text transform="matrix(0.972 0 0 1 129.05 455.60)">0</text><text transform="matrix(0.972 0 0 1 139.60 455.60)">0</text><text transform="matrix(1.025 0 0 1 149.85 455.60)">7</text><text transform="matrix(0.972 0 0 1 160.70 455.60)">0</text><text transform="matrix(0.982 0 0 1 223.74 455.60)">3</text><text transform="matrix(0.925 0 0 1 234.57 455.60)">4</text><text transform="matrix(0.972 0 0 1 244.85 455.60)">0</text><text transform="matrix(0.972 0 0 1 255.40 455.60)">0</text><text transform="matrix(0.972 0 0 1 265.95 455.60)">0</text><text transform="matrix(0.824 0 0 1 276.14 455.60)">E</text><text transform="matrix(0.972 0 0 1 287.05 455.60)">0</text><text transform="matrix(0.754 0 0 1 297.34 455.60)">D</text><text transform="matrix(0.972 0 0 1 356.75 455.60)">0</text><text transform="matrix(0.972 0 0 1 367.30 455.60)">0</text><text transform="matrix(0.972 0 0 1 377.85 455.60)">0</text><text transform="matrix(0.972 0 0 1 388.40 455.60)">0</text><text transform="matrix(0.972 0 0 1 398.95 455.60)">0</text><text transform="matrix(0.972 0 0 1 409.50 455.60)">0</text><text transform="matrix(0.972 0 0 1 420.05 455.60)">0</text><text transform="matrix(0.972 0 0 1 430.60 455.60)">0</text><text transform="matrix(0.907 0 0 1 488.77 455.60)">F</text><text transform="matrix(0.907 0 0 1 499.32 455.60)">F</text><text transform="matrix(0.907 0 0 1 509.87 455.60)">F</text><text transform="matrix(0.907 0 0 1 520.42 455.60)">F</text><text transform="matrix(0.907 0 0 1 530.97 455.60)">F</text><text transform="matrix(0.907 0 0 1 541.52 455.60)">F</text><text transform="matrix(0.907 0 0 1 552.07 455.60)">F</text><text transform="matrix(0.907 0 0 1 562.62 455.60)">F</text><text transform="matrix(0.972 0 0 1 621.75 455.60)">0</text><text transform="matrix(0.972 0 0 1 632.30 455.60)">0</text><text transform="matrix(0.972 0 0 1 642.85 455.60)">0</text><text transform="matrix(0.972 0 0 1 653.40 455.60)">0</text><text transform="matrix(0.972 0 0 1 663.95 455.60)">0</text><text transform="matrix(0.972 0 0 1 674.50 455.60)">0</text><text transform="matrix(0.972 0 0 1 685.05 455.60)">0</text><text transform="matrix(0.972 0 0 1 695.60 455.60)">0</text><text transform="matrix(1.000 0 0 1 756.54 455.60)">.</text><text transform="matrix(1.000 0 0 1 767.09 455.60)">.</text><text transform="matrix(1.000 0 0 1 777.64 455.60)">.</text><text transform="matrix(0.925 0 0 1 786.17 455.60)">4</text><text transform="matrix(1.000 0 0 1 798.74 455.60)">.</text><text transform="matrix(1.000 0 0 1 809.29 455.60)">.</text><text transform="matrix(1.000 0 0 1 819.84 455.60)">.</text><text transform="matrix(1.000 0 0 1 830.39 455.60)">.</text><text transform="matrix(0.977 0 0 1 839.10 455.60)">ÿ</text><text transform="matrix(0.977 0 0 1 849.65 455.60)">ÿ</text><text transform="matrix(0.977 0 0 1 860.20 455.60)">ÿ</text><text transform="matrix(0.977 0 0 1 870.75 455.60)">ÿ</text><text transform="matrix(1.000 0 0 1 883.14 455.60)">.</text><text transform="matrix(1.000 0 0 1 893.69 455.60)">.</text><text transform="matrix(1.000 0 0 1 904.24 455.60)">.</text><text transform="matrix(1.000 0 0 1 914.79 455.60)">.</text><text transform="matrix(0.972 0 0 1 65.75 485.60)">0</text><text transform="matrix(1.042 0 0 1 76.47 485.60)">x</text><text transform="matrix(1.025 0 0 1 86.55 485.60)">7</text><text transform="matrix(0.972 0 0 1 97.40 485.60)">0</text><text transform="matrix(1.084 0 0 1 107.12 485.60)">1</text><text transform="matrix(0.972 0 0 1 118.50 485.60)">0</text><text transform="matrix(0.972 0 0 1 129.05 485.60)">0</text><text transform="matrix(0.972 0 0 1 139.60 485.60)">0</text><text transform="matrix(0.993 0 0 1 150.05 485.60)">8</text><text transform="matrix(0.972 0 0 1 160.70 485.60)">0</text><text transform="matrix(0.972 0 0 1 223.75 485.60)">0</text><text transform="matrix(0.972 0 0 1 234.30 485.60)">0</text><text transform="matrix(0.972 0 0 1 244.85 485.60)">0</text><text transform="matrix(0.972 0 0 1 255.40 485.60)">0</text><text transform="matrix(0.972 0 0 1 265.95 485.60)">0</text><text transform="matrix(0.972 0 0 1 276.50 485.60)">0</text><text transform="matrix(0.972 0 0 1 287.05 485.60)">0</text><text transform="matrix(0.972 0 0 1 297.60 485.60)">0</text><text transform="matrix(0.993 0 0 1 356.65 485.60)">8</text><text transform="matrix(0.972 0 0 1 367.30 485.60)">0</text><text transform="matrix(0.972 0 0 1 377.85 485.60)">0</text><text transform="matrix(0.972 0 0 1 388.40 485.60)">0</text><text transform="matrix(0.972 0 0 1 398.95 485.60)">0</text><text transform="matrix(0.972 0 0 1 409.50 485.60)">0</text><text transform="matrix(0.972 0 0 1 420.05 485.60)">0</text><text transform="matrix(0.972 0 0 1 430.60 485.60)">0</text><text transform="matrix(0.972 0 0 1 489.25 485.60)">0</text><text transform="matrix(0.972 0 0 1 499.80 485.60)">0</text><text transform="matrix(0.972 0 0 1 510.35 485.60)">0</text><text transform="matrix(0.972 0 0 1 520.90 485.60)">0</text><text transform="matrix(0.972 0 0 1 531.45 485.60)">0</text><text transform="matrix(1.084 0 0 1 541.17 485.60)">1</text><text transform="matrix(0.675 0 0 1 553.35 485.60)">A</text><text transform="matrix(0.972 0 0 1 563.10 485.60)">0</text><text transform="matrix(0.972 0 0 1 621.75 485.60)">0</text><text transform="matrix(0.972 0 0 1 632.30 485.60)">0</text><text transform="matrix(0.972 0 0 1 642.85 485.60)">0</text><text transform="matrix(0.972 0 0 1 653.40 485.60)">0</text><text transform="matrix(0.972 0 0 1 663.95 485.60)">0</text><text transform="matrix(0.972 0 0 1 674.50 485.60)">0</text><text transform="matrix(1.084 0 0 1 684.22 485.60)">1</text><text transform="matrix(0.972 0 0 1 695.60 485.60)">0</text><text transform="matrix(1.000 0 0 1 756.54 485.60)">.</text><text transform="matrix(1.000 0 0 1 767.09 485.60)">.</text><text transform="matrix(1.000 0 0 1 777.64 485.60)">.</text><text transform="matrix(1.000 0 0 1 788.19 485.60)">.</text><text transform="matrix(1.000 0 0 1 798.74 485.60)">.</text><text transform="matrix(1.000 0 0 1 809.29 485.60)">.</text><text transform="matrix(1.000 0 0 1 819.84 485.60)">.</text><text transform="matrix(1.000 0 0 1 830.39 485.60)">.</text><text transform="matrix(1.000 0 0 1 851.49 485.60)">.</text><text transform="matrix(1.000 0 0 1 862.04 485.60)">.</text><text transform="matrix(1.000 0 0 1 872.59 485.60)">.</text><text transform="matrix(1.000 0 0 1 883.14 485.60)">.</text><text transform="matrix(1.000 0 0 1 893.69 485.60)">.</text><text transform="matrix(1.000 0 0 1 904.24 485.60)">.</text><text transform="matrix(1.000 0 0 1 914.79 485.60)">.</text><text transform="matrix(0.972 0 0 1 65.75 515.60)">0</text><text transform="matrix(1.042 0 0 1 76.47 515.60)">x</text><text transform="matrix(1.025 0 0 1 86.55 515.60)">7</text><text transform="matrix(0.972 0 0 1 97.40 515.60)">0</text><text transform="matrix(1.084 0 0 1 107.12 515.60)">1</text><text transform="matrix(0.972 0 0 1 118.50 515.60)">0</text><text transform="matrix(0.972 0 0 1 129.05 515.60)">0</text><text transform="matrix(0.972 0 0 1 139.60 515.60)">0</text><text transform="matrix(1.014 0 0 1 149.95 515.60)">9</text><text transform="matrix(0.972 0 0 1 160.70 515.60)">0</text><text transform="matrix(0.972 0 0 1 223.75 515.60)">0</text><text transform="matrix(0.972 0 0 1 234.30 515.60)">0</text><text transform="matrix(0.972 0 0 1 244.85 515.60)">0</text><text transform="matrix(0.972 0 0 1 255.40 515.60)">0</text><text transform="matrix(0.972 0 0 1 265.95 515.60)">0</text><text transform="matrix(0.972 0 0 1 276.50 515.60)">0</text><text transform="matrix(0.972 0 0 1 287.05 515.60)">0</text><text transform="matrix(0.972 0 0 1 297.60 515.60)">0</text><text transform="matrix(0.972 0 0 1 356.75 515.60)">0</text><text transform="matrix(0.972 0 0 1 367.30 515.60)">0</text><text transform="matrix(0.972 0 0 1 377.85 515.60)">0</text><text transform="matrix(0.972 0 0 1 388.40 515.60)">0</text><text transform="matrix(0.972 0 0 1 398.95 515.60)">0</text><text transform="matrix(0.972 0 0 1 409.50 515.60)">0</text><text transform="matrix(0.972 0 0 1 420.05 515.60)">0</text><text transform="matrix(0.972 0 0 1 430.60 515.60)">0</text><text transform="matrix(0.972 0 0 1 489.25 515.60)">0</text><text transform="matrix(0.972 0 0 1 499.80 515.60)">0</text><text transform="matrix(0.972 0 0 1 510.35 515.60)">0</text><text transform="matrix(0.972 0 0 1 520.90 515.60)">0</text><text transform="matrix(0.972 0 0 1 531.45 515.60)">0</text><text transform="matrix(0.972 0 0 1 542.00 515.60)">0</text><text transform="matrix(0.972 0 0 1 552.55 515.60)">0</text><text transform="matrix(0.972 0 0 1 563.10 515.60)">0</text><text transform="matrix(0.972 0 0 1 621.75 515.60)">0</text><text transform="matrix(0.972 0 0 1 632.30 515.60)">0</text><text transform="matrix(0.972 0 0 1 642.85 515.60)">0</text><text transform="matrix(0.972 0 0 1 653.40 515.60)">0</text><text transform="matrix(0.972 0 0 1 663.95 515.60)">0</text><text transform="matrix(0.972 0 0 1 674.50 515.60)">0</text><text transform="matrix(0.972 0 0 1 685.05 515.60)">0</text><text transform="matrix(0.972 0 0 1 695.60 515.60)">0</text><text transform="matrix(1.000 0 0 1 756.54 515.60)">.</text><text transform="matrix(1.000 0 0 1 767.09 515.60)">.</text><text transform="matrix(1.000 0 0 1 777.64 515.60)">.</text><text transform="matrix(1.000 0 0 1 788.19 515.60)">.</text><text transform="matrix(1.000 0 0 1 798.74 515.60)">.</text><text transform="matrix(1.000 0 0 1 809.29 515.60)">.</text><text transform="matrix(1.000 0 0 1 819.84 515.60)">.</text><text transform="matrix(1.000 0 0 1 830.39 515.60)">.</text><text transform="matrix(1.000 0 0 1 840.94 515.60)">.</text><text transform="matrix(1.000 0 0 1 851.49 515.60)">.</text><text transform="matrix(1.000 0 0 1 862.04 515.60)">.</text><text transform="matrix(1.000 0 0 1 872.59 515.60)">.</text><text transform="matrix(1.000 0 0 1 883.14 515.60)">.</text><text transform="matrix(1.000 0 0 1 893.69 515.60)">.</text><text transform="matrix(1.000 0 0 1 904.24 515.60)">.</text><text transform="matrix(1.000 0 0 1 914.79 515.60)">.</text><text transform="matrix(0.972 0 0 1 65.75 545.60)">0</text><text transform="matrix(1.042 0 0 1 76.47 545.60)">x</text><text transform="matrix(1.025 0 0 1 86.55 545.60)">7</text><text transform="matrix(0.972 0 0 1 97.40 545.60)">0</text><text transform="matrix(1.084 0 0 1 107.12 545.60)">1</text><text transform="matrix(0.972 0 0 1 118.50 545.60)">0</text><text transform="matrix(0.972 0 0 1 129.05 545.60)">0</text><text transform="matrix(0.972 0 0 1 139.60 545.60)">0</text><text transform="matrix(0.675 0 0 1 150.95 545.60)">A</text><text transform="matrix(0.972 0 0 1 160.70 545.60)">0</text><text transform="matrix(0.907 0 0 1 223.27 545.60)">F</text><text transform="matrix(0.907 0 0 1 233.82 545.60)">F</text><text transform="matrix(0.907 0 0 1 244.37 545.60)">F</text><text transform="matrix(0.907 0 0 1 254.92 545.60)">F</text><text transform="matrix(0.993 0 0 1 265.85 545.60)">5</text><text transform="matrix(0.925 0 0 1 276.77 545.60)">4</text><text transform="matrix(0.993 0 0 1 286.95 545.60)">5</text><text transform="matrix(0.982 0 0 1 297.59 545.60)">3</text><text transform="matrix(0.972 0 0 1 356.75 545.60)">0</text><text transform="matrix(0.972 0 0 1 367.30 545.60)">0</text><text transform="matrix(0.972 0 0 1 377.85 545.60)">0</text><text transform="matrix(0.972 0 0 1 388.40 545.60)">0</text><text transform="matrix(0.972 0 0 1 398.95 545.60)">0</text><text transform="matrix(1.084 0 0 1 408.67 545.60)">1</text><text transform="matrix(0.675 0 0 1 420.85 545.60)">A</text><text transform="matrix(0.972 0 0 1 430.60 545.60)">0</text><text transform="matrix(1.014 0 0 1 488.96 545.60)">6</text><text transform="matrix(0.707 0 0 1 499.98 545.60)">C</text><text transform="matrix(1.025 0 0 1 510.05 545.60)">2</text><text transform="matrix(0.993 0 0 1 520.80 545.60)">5</text><text transform="matrix(0.824 0 0 1 531.09 545.60)">E</text><text transform="matrix(1.014 0 0 1 541.71 545.60)">6</text><text transform="matrix(0.982 0 0 1 552.54 545.60)">3</text><text transform="matrix(0.982 0 0 1 563.09 545.60)">3</text><text transform="matrix(0.925 0 0 1 622.02 545.60)">4</text><text transform="matrix(1.025 0 0 1 632.00 545.60)">2</text><text transform="matrix(1.014 0 0 1 642.56 545.60)">6</text><text transform="matrix(0.993 0 0 1 653.30 545.60)">5</text><text transform="matrix(1.084 0 0 1 663.12 545.60)">1</text><text transform="matrix(0.993 0 0 1 674.40 545.60)">5</text><text transform="matrix(0.993 0 0 1 684.95 545.60)">5</text><text transform="matrix(0.907 0 0 1 695.12 545.60)">F</text><text transform="matrix(0.842 0 0 1 754.03 545.60)">S</text><text transform="matrix(0.857 0 0 1 764.95 545.60)">T</text><text transform="matrix(0.977 0 0 1 775.80 545.60)">ÿ</text><text transform="matrix(0.977 0 0 1 786.35 545.60)">ÿ</text><text transform="matrix(1.000 0 0 1 809.29 545.60)">.</text><text transform="matrix(1.000 0 0 1 819.84 545.60)">.</text><text transform="matrix(1.000 0 0 1 830.39 545.60)">.</text><text transform="matrix(0.982 0 0 1 838.64 545.60)">3</text><text transform="matrix(0.600 0 0 1 849.33 545.60)">æ</text><text transform="matrix(0.596 0 0 1 859.83 545.60)">%</text><text x="869.77" y="545.60" font-family="Liberation Mono">l</text><text transform="matrix(0.828 0 0 1 881.59 545.60)">_</text><text transform="matrix(1.000 0 0 1 893.69 545.60)">.</text><text transform="matrix(1.000 0 0 1 901.82 545.60)">e</text><text transform="matrix(0.839 0 0 1 912.12 545.60)">B</text></g></svg><div class="a" style="left:1091.3px;top:226px;width:20px;height:350px;background:linear-gradient(to right,#e6e6e6,#eeeeee 50%,#e2e2e2)"></div><div class="a" style="left:1098px;top:193px;width:13px;height:33px;background:linear-gradient(#f0f0f0,#e0e0e0)"></div><svg class="a" style="left:1091px;top:224px" width="21" height="20"><path d="M6.2 12.2 L10.7 8 L15.2 12.2" fill="none" stroke="#7a7a7a" stroke-width="1.6"/></svg><div class="a" style="left:1094.2px;top:244.5px;width:15.6px;height:42.2px;background:linear-gradient(to right,#f4f4f4,#dcdcdc);border:1px solid #b4b4b4;border-radius:3px"></div><svg class="a" style="left:1091px;top:538px" width="21" height="20"><path d="M6.2 7.8 L10.7 12 L15.2 7.8" fill="none" stroke="#7a7a7a" stroke-width="1.6"/></svg><div class="a" style="left:60px;top:556px;width:1031.3px;height:20px;background:linear-gradient(#ececec,#e6e6e6)"></div><svg class="a" style="left:57px;top:556px" width="20" height="20"><path d="M13 5.8 L8.6 10 L13 14.2" fill="none" stroke="#7a7a7a" stroke-width="1.5"/></svg><div class="a" style="left:78.4px;top:558.2px;width:993.9px;height:15.1px;background:linear-gradient(#f2f2f2,#dfdfdf);border:1px solid #b8b8b8;border-radius:3px"></div><svg class="a" style="left:1074px;top:556px" width="20" height="20"><path d="M7.8 5.8 L12.2 10 L7.8 14.2" fill="none" stroke="#7a7a7a" stroke-width="1.5"/></svg><div class="a" style="left:52px;top:577px;width:1063px;height:9.7px;background:linear-gradient(#f6f6f6,#eeeeee);border-bottom:1.5px solid #d2d2d2"></div><div class="tS" style="left:57.68px;top:596.53px;font-size:16.5px;color:#34445a;">Log</div><div class="a" style="left:637px;top:593.4px;width:22.6px;height:22.6px;background:linear-gradient(#f7f7f7,#e0e0e0);border:1px solid #c4c4c4;border-radius:3px"></div><div class="tS" style="left:667.09px;top:598.23px;font-size:16.03px;color:#555;transform:scaleX(1.0240);transform-origin:0 0;">Live Update</div><div class="tS" style="left:780.70px;top:597.66px;font-size:16.7px;color:#34445a;transform:scaleX(1.0485);transform-origin:0 0;">Verbosity level</div><div class="a" style="left:919px;top:593.3px;width:22px;height:22px;border-radius:50%;background:linear-gradient(#f7f7f7,#dedede);border:1px solid #c2c2c2"></div><div class="a" style="left:925.2px;top:599.5px;width:9.6px;height:9.6px;border-radius:50%;background:#4a4a4a"></div><div class="tS" style="left:949.50px;top:598.26px;font-size:16px;color:#555;">1</div><div class="a" style="left:984px;top:593.3px;width:22px;height:22px;border-radius:50%;background:linear-gradient(#f7f7f7,#dedede);border:1px solid #c2c2c2"></div><div class="tS" style="left:1013.80px;top:598.26px;font-size:16px;color:#555;">2</div><div class="a" style="left:1048.8px;top:593.3px;width:22px;height:22px;border-radius:50%;background:linear-gradient(#f7f7f7,#dedede);border:1px solid #c2c2c2"></div><div class="tS" style="left:1078.94px;top:598.26px;font-size:16px;color:#555;">3</div><div class="a" style="left:58.5px;top:629.5px;width:997.5px;height:95px;background:#f4f4f5;border:2px solid #7aadd0"></div><div class="a" style="left:60px;top:631px;width:974px;height:72px;overflow:hidden"><div class="tS" style="left:8.90px;top:-6.90px;font-size:16.3px;color:#3636cf;transform:scaleX(0.9015);transform-origin:0 0">11:51:46 : Read progress:</div><div class="tS" style="left:8.90px;top:13.10px;font-size:16.3px;color:#b6c83c;transform:scaleX(0.9015);transform-origin:0 0">11:51:47 : Data read successfully</div><div class="tS" style="left:8.90px;top:33.10px;font-size:16.3px;color:#3636cf;transform:scaleX(0.9015);transform-origin:0 0">11:51:47 : Time elapsed during the read operation is: 00:00:00.873</div></div><div class="a" style="left:60px;top:703.4px;width:974.4px;height:19.6px;background:linear-gradient(#e6e6e6,#eeeeee)"></div><div class="a" style="left:1034.4px;top:631px;width:20px;height:92px;background:linear-gradient(to right,#ebebeb,#e6e6e6 60%,#dcdcdc)"></div><svg class="a" style="left:1033px;top:630px" width="21" height="20"><path d="M6 12.2 L10.3 8 L14.6 12.2" fill="none" stroke="#858585" stroke-width="1.5"/></svg><svg class="a" style="left:1033px;top:685px" width="21" height="20"><path d="M6 7.8 L10.3 12 L14.6 7.8" fill="none" stroke="#858585" stroke-width="1.5"/></svg><svg class="a" style="left:58px;top:703px" width="20" height="20"><path d="M12.2 5.5 L7.8 9.8 L12.2 14.1" fill="none" stroke="#858585" stroke-width="1.5"/></svg><div class="a" style="left:79.5px;top:706px;width:461px;height:14px;background:linear-gradient(#f2f2f2,#dedede);border:1px solid #bdbdbd;border-radius:3px"></div><svg class="a" style="left:1016px;top:703px" width="20" height="20"><path d="M7.8 5.3 L12 9.5 L7.8 13.7" fill="none" stroke="#858585" stroke-width="1.5"/></svg><svg class="a" style="left:1066px;top:634px" width="38" height="38" viewBox="0 0 38 38">
<path d="M22.6 14.2 L27 4.9 Q29 3.5 31.4 5.2 L31.8 6.8 L27.4 16.2" fill="none" stroke="#1fa3e6" stroke-width="2" stroke-linejoin="round"/>
<path d="M17.7 12.8 L29.7 18.5 L23.4 33.3 L5.5 23.2 Z" fill="none" stroke="#1fa3e6" stroke-width="2.3" stroke-linejoin="round"/>
<path d="M15.3 17.4 L28.4 23.5" stroke="#1fa3e6" stroke-width="2" fill="none"/>
<path d="M11.2 27.2 L13.6 24 L15.4 28.4 Z M17.4 30.4 L19.8 27.2 L21.4 31.4 Z" fill="#1fa3e6"/>
</svg><svg class="a" style="left:1066px;top:680px" width="38" height="40" viewBox="0 0 38 40">
<path d="M5 4.4 H27.9 L34.2 11 V35 Q34.2 36.4 32.8 36.4 H5 Q3.6 36.4 3.6 35 V5.8 Q3.6 4.4 5 4.4 Z" fill="#1fa3e6"/>
<rect x="10.1" y="7.1" width="17.8" height="8.8" fill="#f4f6f8"/>
<rect x="22.7" y="7.9" width="3.6" height="7.2" fill="#1fa3e6"/>
<rect x="6.1" y="18.9" width="26.6" height="15.1" fill="#f3f3f3"/>
</svg><div class="a" style="left:1115px;top:75px;width:1px;height:655px;background:#cdcdcd"></div><div class="a" style="left:1116px;top:75px;width:8px;height:655px;background:linear-gradient(to right,#f7f7f7,#e4e4e4)"></div><div class="a" style="left:1124px;top:76px;width:1px;height:654px;background:#c6c6c6"></div><div class="a" style="left:1125px;top:76px;width:157px;height:1px;background:#cfcfcf"></div><div class="a" style="left:1125px;top:77px;width:157px;height:653px;background:#f2f2f2"></div><div class="a" style="left:1131.5px;top:80px;width:160px;height:35.6px;background:#3ca9dc;border-radius:4px"></div><div class="tS" style="left:1142.29px;top:90.09px;font-size:15.61px;color:#fff;transform:scaleX(1.0147);transform-origin:0 0;">ST-LINK</div><svg class="a" style="left:0;top:0" width="1282" height="730"><path d="M1263.7 95 H1273 L1268.35 102 Z" fill="#5a6a70"/></svg><div class="a" style="left:1131.5px;top:125px;width:170px;height:455.5px;background:#03234b;border-radius:9px"></div><div class="tS" style="left:1207.32px;top:135.13px;font-size:15.2px;color:#7d8ea8;">ST-LINK configuration</div><div class="a" style="left:1139px;top:153px;width:160px;height:2.5px;background:#c3cad6"></div><div class="tS" style="left:1137.04px;top:165.22px;font-size:14.74px;color:#7f8fa7;">Serial number</div><div class="a" style="left:1262.7px;top:163.1px;width:40px;height:29.7px;background:#43587a;border-radius:4px"></div><div class="tS" style="left:1271.11px;top:170.42px;font-size:14.74px;color:#64758d;">49FF6E</div><div class="tS" style="left:1136.52px;top:200.22px;font-size:14.74px;color:#7f8fa7;">Port</div><div class="a" style="left:1262.7px;top:198.1px;width:40px;height:29.7px;background:#43587a;border-radius:4px"></div><div class="tS" style="left:1270.74px;top:205.42px;font-size:14.74px;color:#64758d;">SWD</div><div class="tS" style="left:1136.52px;top:235.22px;font-size:14.74px;color:#7f8fa7;">Frequency (kHz)</div><div class="a" style="left:1262.7px;top:233.1px;width:40px;height:29.7px;background:#43587a;border-radius:4px"></div><div class="tS" style="left:1271.11px;top:240.42px;font-size:14.74px;color:#64758d;">4000</div><div class="tS" style="left:1136.52px;top:270.22px;font-size:14.74px;color:#7f8fa7;">Mode</div><div class="a" style="left:1262.7px;top:268.09999999999997px;width:40px;height:29.7px;background:#43587a;border-radius:4px"></div><div class="tS" style="left:1270.22px;top:275.42px;font-size:14.74px;color:#64758d;">Normal</div><div class="tS" style="left:1137.70px;top:305.22px;font-size:14.74px;color:#7f8fa7;">Access port</div><div class="a" style="left:1262.7px;top:303.09999999999997px;width:40px;height:29.7px;background:#43587a;border-radius:4px"></div><div class="tS" style="left:1270.29px;top:310.42px;font-size:14.74px;color:#64758d;">1</div><div class="tS" style="left:1136.52px;top:340.22px;font-size:14.74px;color:#7f8fa7;">Reset mode</div><div class="a" style="left:1262.7px;top:338.09999999999997px;width:40px;height:29.7px;background:#43587a;border-radius:4px"></div><div class="tS" style="left:1270.22px;top:345.42px;font-size:14.74px;color:#64758d;">Hardware reset</div><div class="tS" style="left:1137.04px;top:375.22px;font-size:14.74px;color:#7f8fa7;">Speed</div><div class="a" style="left:1262.7px;top:373.09999999999997px;width:40px;height:29.7px;background:#43587a;border-radius:4px"></div><div class="tS" style="left:1270.22px;top:380.42px;font-size:14.74px;color:#64758d;">Reliable</div><div class="tS" style="left:1137.04px;top:410.22px;font-size:14.74px;color:#7f8fa7;">Shared</div><div class="a" style="left:1262.7px;top:408.09999999999997px;width:40px;height:29.7px;background:#43587a;border-radius:4px"></div><div class="tS" style="left:1270.22px;top:415.42px;font-size:14.74px;color:#64758d;">Disabled</div><div class="tS" style="left:1131.51px;top:444.76px;font-size:12.8px;color:#7f8fa7;transform:scaleX(0.9696);transform-origin:0 0;">Debug in Low Power mode</div><div class="tS" style="left:1137.33px;top:460.30px;font-size:15px;color:#7f8fa7;transform:scaleX(0.9766);transform-origin:0 0;">External loader</div><div class="tS" style="left:1265.00px;top:460.30px;font-size:15px;color:#7f8fa7;">W25</div><div class="tS" style="left:1138.19px;top:479.10px;font-size:15px;color:#7f8fa7;transform:scaleX(1.0171);transform-origin:0 0;">Target voltage</div><div class="tS" style="left:1267.47px;top:479.10px;font-size:15px;color:#7f8fa7;">3.2</div><div class="tS" style="left:1137.32px;top:497.70px;font-size:15px;color:#7f8fa7;transform:scaleX(0.9807);transform-origin:0 0;">Firmware version</div><div class="tS" style="left:1265.00px;top:497.70px;font-size:15px;color:#7f8fa7;">V2J</div><div class="a" style="left:1131.5px;top:586px;width:170px;height:160px;background:#03234b;border-radius:9px"></div><div class="tS" style="left:1220.30px;top:595.93px;font-size:15.2px;color:#e6eaf0;">Target information</div><div class="a" style="left:1139px;top:614px;width:160px;height:2.5px;background:#c3cad6"></div><div class="tS" style="left:1137.82px;top:620.04px;font-size:14.6px;color:#e6eaf0;transform:scaleX(1.0145);transform-origin:0 0;">Board</div><div class="tS" style="left:1137.83px;top:638.64px;font-size:14.6px;color:#e6eaf0;">Device</div><div class="tS" style="left:1138.71px;top:657.24px;font-size:14.6px;color:#e6eaf0;">Type</div><div class="tS" style="left:1137.84px;top:675.84px;font-size:14.6px;color:#e6eaf0;transform:scaleX(0.9936);transform-origin:0 0;">Device ID</div><div class="tS" style="left:1137.86px;top:694.44px;font-size:14.6px;color:#e6eaf0;transform:scaleX(0.9797);transform-origin:0 0;">Revision ID</div><div class="tS" style="left:1137.90px;top:713.04px;font-size:14.6px;color:#e6eaf0;transform:scaleX(0.9383);transform-origin:0 0;">Flash size</div>
</body></html>
